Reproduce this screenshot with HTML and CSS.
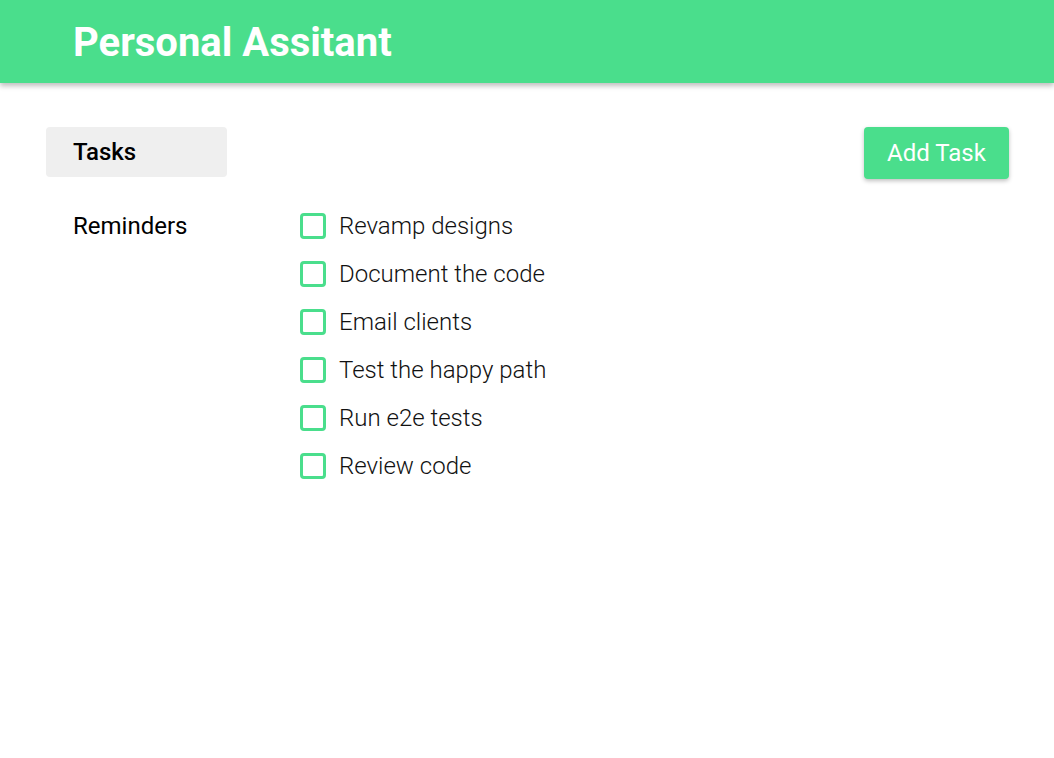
FILE: index.html
```html
<!DOCTYPE html>
<html>
<head>
<title>Personal Assitant</title>
<link rel="stylesheet" href="styles.css">
</head>
<body>
  <header class="topbar">
    <h1>Personal Assitant</h1>
  </header>
  <main class="layout">
    <nav class="sidebar">
      <div class="nav-item active">Tasks</div>
      <div class="nav-item">Reminders</div>
    </nav>
    <section class="content">
      <div class="toolbar">
        <button class="add-btn">Add Task</button>
      </div>
      <ul class="task-list">
        <li><span class="check"></span>Revamp designs</li>
        <li><span class="check"></span>Document the code</li>
        <li><span class="check"></span>Email clients</li>
        <li><span class="check"></span>Test the happy path</li>
        <li><span class="check"></span>Run e2e tests</li>
        <li><span class="check"></span>Review code</li>
      </ul>
    </section>
  </main>
</body>
</html>
```
FILE: styles.css
```css
* {
  margin: 0;
  padding: 0;
  box-sizing: border-box;
  font-family: Roboto, "Liberation Sans", sans-serif;
}
body {
  background: #ffffff;
  color: #000000;
}

.topbar {
  height: 83px;
  background-color: #4ade8c;
  box-shadow: 0px 3px 5px rgba(0, 0, 0, 0.25);
  display: flex;
  align-items: center;
  padding-left: 73px;
}
.topbar h1 {
  color: white;
  font-size: 40px;
  font-weight: 700;
  margin-top: 1px;
}

.layout {
  display: flex;
  padding: 44px 45px 0 46px;
}

.sidebar {
  width: 181px;
  display: flex;
  flex-direction: column;
  gap: 24px;
}
.nav-item {
  height: 50px;
  display: flex;
  align-items: center;
  padding-left: 27px;
  font-size: 24px;
  border-radius: 4px;
}
.nav-item.active {
  background-color: #efefef;
  font-weight: 500;
}

.content {
  flex-grow: 1;
  display: flex;
  flex-direction: column;
  padding-left: 73px;
}
.toolbar {
  display: flex;
  justify-content: flex-end;
}
.add-btn {
  width: 145px;
  height: 52px;
  background-color: #4ade8c;
  color: white;
  border: none;
  border-radius: 4px;
  font-size: 24px;
  box-shadow: 0px 2px 4px rgba(0, 0, 0, 0.25);
  cursor: pointer;
}

.task-list {
  list-style: none;
  margin-top: 23px;
}
.task-list li {
  height: 48px;
  display: flex;
  align-items: center;
  gap: 13px;
  font-size: 24px;
  font-weight: 300;
  color: #111;
}
.check {
  width: 26px;
  height: 26px;
  border: 3px solid #4ade8c;
  border-radius: 4px;
  flex-shrink: 0;
}
```
